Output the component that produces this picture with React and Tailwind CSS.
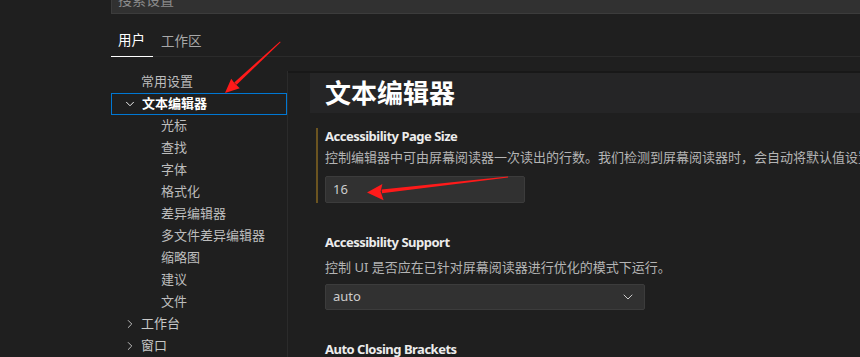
import React from 'react';
import { ChevronDown, ChevronRight } from 'lucide-react';

const children = ['光标', '查找', '字体', '格式化', '差异编辑器', '多文件差异编辑器', '缩略图', '建议', '文件'];

function Arrows() {
    // red annotation arrows drawn over the screenshot
    return (
        <svg className="absolute inset-0 pointer-events-none" width="860" height="357" viewBox="0 0 860 357">
            <polygon points="280,41.5 280.6,42.3 236.6,84.7 234.2,82.5" fill="#ff1a1a" />
            <polygon points="225,93 231.2,78.8 234.6,83.2 239.8,88.2" fill="#ff1a1a" />
            <polygon points="508,176.6 508.1,177.4 382,193.2 381.6,189.6" fill="#ff1a1a" />
            <polygon points="367,192.6 382.4,184 380.6,191.4 383.6,200.2" fill="#ff1a1a" />
        </svg>
    );
}

export default function App() {
    return (
        <div className="relative w-[860px] h-[357px] overflow-hidden bg-[#1f1f1f] font-['Noto_Sans','Noto_Sans_CJK_SC',sans-serif] text-[13px]">
            {/* search box */}
            <div className="pl-[111px]">
                <div className="h-[14px] bg-[#313131] border-l border-b border-[#3c3c3c] overflow-hidden">
                    <div className="pl-[6px] -mt-[10px] leading-[20px] text-[14px] text-[#8b8b8b]">搜索设置</div>
                </div>
            </div>

            {/* tabs */}
            <div className="ml-[111px] h-[43px] flex border-b border-[#2b2b2b]">
                <div className="h-[43px] flex items-end pl-[7px] pr-[8px] pb-[7px] border-b border-white leading-[18px] text-[13.5px] text-white">用户</div>
                <div className="h-[43px] flex items-end px-[8px] pb-[7px] leading-[18px] text-[13.5px] text-[#a8a8a8]">工作区</div>
            </div>

            <div className="flex pt-[14px]">
                <div className="w-[111px] shrink-0" />

                {/* table of contents */}
                <div className="w-[177px] h-[300px] shrink-0 border-r border-[#2b2b2b] text-[#bdbdbd]">
                    <div className="h-[22px] flex items-center pl-[30px]">常用设置</div>
                    <div className="h-[22px] flex items-center border border-[#0078d4] pl-[11px] text-white font-bold">
                        <ChevronDown size={14} strokeWidth={1.6} className="mr-[5px]" />
                        文本编辑器
                    </div>
                    {children.map((c) => (
                        <div key={c} className="h-[22px] flex items-center pl-[50px]">{c}</div>
                    ))}
                    <div className="h-[22px] flex items-center pl-[12px] text-[#c8c8c8]">
                        <ChevronRight size={14} strokeWidth={1.6} className="mr-[4px]" />
                        工作台
                    </div>
                    <div className="h-[22px] flex items-center pl-[12px] text-[#c8c8c8]">
                        <ChevronRight size={14} strokeWidth={1.6} className="mr-[4px]" />
                        窗口
                    </div>
                </div>

                {/* settings list */}
                <div className="flex-1 min-w-0 overflow-hidden">
                    <div className="border-t-2 border-[#181818] flex">
                        <div className="w-[22px] shrink-0" />
                        <div className="flex-1 h-[40px] bg-[#252526] flex items-center pl-[15px]">
                            <h1 className="text-[26px] font-bold text-white leading-none">文本编辑器</h1>
                        </div>
                    </div>

                    <div className="ml-[28px] mt-[15px] border-l-2 border-[#6b5420] pl-[7px]">
                        <div className="leading-[16px] font-bold tracking-[-0.5px] text-[#ececec]">Accessibility Page Size</div>
                        <div className="mt-[4px] leading-[18px] text-[#b4b4b4] whitespace-nowrap">
                            控制编辑器中可由屏幕阅读器一次读出的行数。我们检测到屏幕阅读器时，会自动将默认值设置为 500。
                        </div>
                        <div className="mt-[10px] w-[200px] h-[27px] bg-[#313131] border border-[#3c3c3c] rounded-[2px] flex items-center pl-[7px] text-[#cccccc]">16</div>
                    </div>

                    <div className="ml-[30px] mt-[30px] pl-[7px]">
                        <div className="leading-[18px] font-bold tracking-[-0.5px] text-[#ececec]">Accessibility Support</div>
                        <div className="mt-[7px] leading-[18px] text-[#b4b4b4] whitespace-nowrap">控制 UI 是否应在已针对屏幕阅读器进行优化的模式下运行。</div>
                        <div className="mt-[8px] w-[320px] h-[26px] bg-[#313131] border border-[#3c3c3c] rounded-[2px] flex items-center justify-between pl-[7px] pr-[8px] text-[#cccccc]">
                            <span>auto</span>
                            <ChevronDown size={16} strokeWidth={1.5} />
                        </div>
                    </div>

                    <div className="ml-[30px] mt-[30px] pl-[7px]">
                        <div className="leading-[18px] font-bold tracking-[-0.5px] text-[#ececec]">Auto Closing Brackets</div>
                    </div>
                </div>
            </div>

            <Arrows />
        </div>
    );
}
